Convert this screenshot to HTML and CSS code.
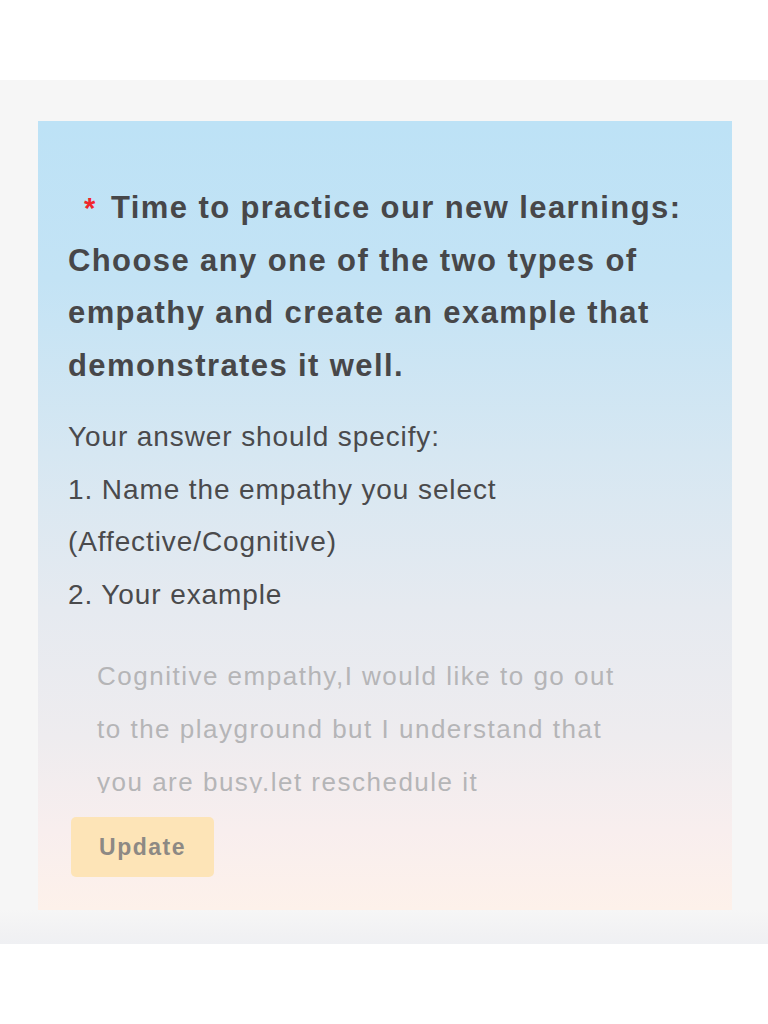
FILE: index.html
```html
<!DOCTYPE html>
<html lang="en">
<head>
<meta charset="utf-8">
<title>Practice question</title>
<link rel="stylesheet" href="styles.css">
</head>
<body>
<div class="top-space"></div>
<section class="panel">
  <div class="card">
    <h2 class="question"><span class="required">*</span>Time to practice our new learnings: Choose any one of the two types of empathy and create an example that demonstrates it well.</h2>
    <div class="instructions">
      <p>Your answer should specify:</p>
      <p>1. Name the empathy you select (Affective/Cognitive)</p>
      <p>2. Your example</p>
    </div>
    <div class="answer">
      <div class="answer-text">Cognitive empathy,I would like to go out to the playground but I understand that you are busy.let reschedule it</div>
    </div>
    <button class="update-btn" type="button">Update</button>
  </div>
</section>
</body>
</html>
```

FILE: styles.css
```css
html, body {
  margin: 0;
  padding: 0;
  background: #ffffff;
}

body {
  font-family: "Liberation Sans", Arial, Helvetica, sans-serif;
  width: 768px;
  height: 1024px;
  overflow: hidden;
}

.top-space {
  height: 80px;
  background: #ffffff;
}

.panel {
  background: linear-gradient(to bottom, #f6f6f6 0%, #f6f6f6 96%, #f1f1f3 99%, #eff0f3 100%);
  padding: 41px 36px 34px 38px;
}

.card {
  background: linear-gradient(to bottom,
    #bde2f6 0%,
    #c3e3f5 20%,
    #d6e7f2 42%,
    #e6eaf0 62%,
    #eeecef 78%,
    #f8eeee 90%,
    #fdf1ea 100%);
  padding: 61px 30px 33px 30px;
}

.question {
  margin: 0;
  font-size: 31px;
  font-weight: 700;
  line-height: 52.5px;
  letter-spacing: 1.4px;
  color: #474749;
  text-indent: 16px;
}

.required {
  display: inline-block;
  text-indent: 0;
  color: #f0262c;
  font-size: 29px;
  width: 27px;
}

.instructions {
  margin-top: 19px;
  font-size: 28px;
  line-height: 52.5px;
  letter-spacing: 0.9px;
  color: #4a4a4c;
}

.instructions p {
  margin: 0;
}

.answer {
  margin-top: 29px;
  padding-left: 29px;
  width: 543px;
  height: 143px;
  overflow: hidden;
}

.answer-text {
  font-size: 26px;
  line-height: 53px;
  letter-spacing: 1.5px;
  color: #b5b5b7;
}

.update-btn {
  display: block;
  margin: 24px 0 0 3px;
  width: 143px;
  height: 60px;
  padding: 0;
  border: none;
  border-radius: 5px;
  background: #fde4b7;
  font-family: "Liberation Sans", Arial, Helvetica, sans-serif;
  font-size: 23px;
  font-weight: 700;
  letter-spacing: 1.5px;
  color: #8d8984;
  text-align: center;
}
```
